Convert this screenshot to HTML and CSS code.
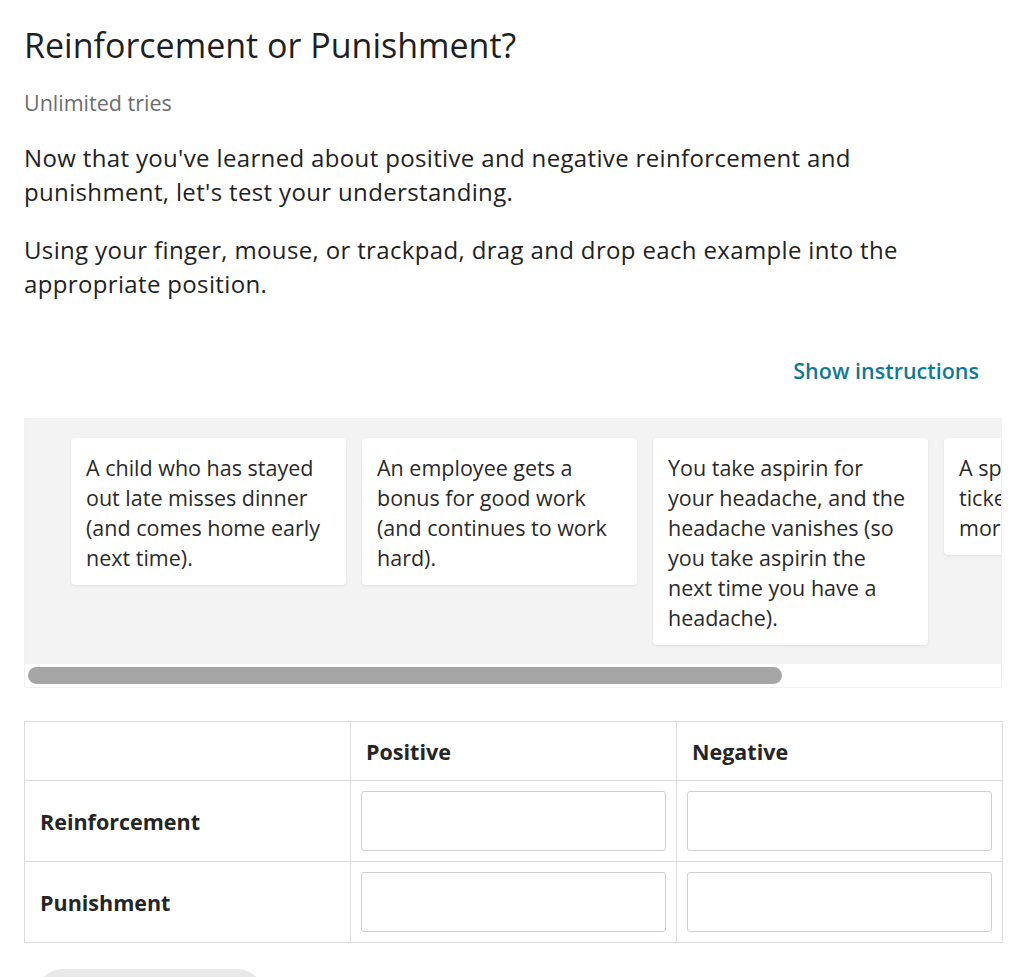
FILE: index.html
```html
<!DOCTYPE html>
<html lang="en">
<head>
    <meta charset="UTF-8">
    <meta name="viewport" content="width=device-width, initial-scale=1.0">
    <title>Reinforcement or Punishment?</title>
    <link rel="stylesheet" href="styles.css">
</head>
<body>
    <div class="activity">
        <h1 class="title">Reinforcement or Punishment?</h1>
        <p class="tries">Unlimited tries</p>

        <div class="intro">
            <p>Now that you've learned about positive and negative reinforcement and punishment, let's test your understanding.</p>
            <p>Using your finger, mouse, or trackpad, drag and drop each example into the appropriate position.</p>
        </div>

        <div class="toolbar">
            <a href="#" class="show-instructions">Show instructions</a>
        </div>

        <!-- Draggable examples -->
        <div class="card-bank">
            <div class="card-track">
                <div class="card">A child who has stayed out late misses dinner (and comes home early next time).</div>
                <div class="card">An employee gets a bonus for good work (and continues to work hard).</div>
                <div class="card">You take aspirin for your headache, and the headache vanishes (so you take aspirin the next time you have a headache).</div>
                <div class="card">A speeding driver gets a ticket each time (no more speeding).</div>
            </div>
            <div class="scroll-track">
                <div class="scroll-thumb"></div>
            </div>
        </div>

        <!-- Drop targets -->
        <table class="grid">
            <tr>
                <th></th>
                <th>Positive</th>
                <th>Negative</th>
            </tr>
            <tr>
                <th>Reinforcement</th>
                <td><div class="drop-zone"></div></td>
                <td><div class="drop-zone"></div></td>
            </tr>
            <tr>
                <th>Punishment</th>
                <td><div class="drop-zone"></div></td>
                <td><div class="drop-zone"></div></td>
            </tr>
        </table>

        <button class="check-button">Check</button>
    </div>
</body>
</html>
```

FILE: styles.css
```css
body {
    margin: 0;
    background-color: #ffffff;
    font-family: 'Open Sans', 'Noto Sans', sans-serif;
    color: #222222;
}
.activity {
    width: 978px;
    padding: 24px 0 0 24px;
}
.title {
    font-size: 34px;
    font-weight: 400;
    line-height: 42px;
    margin: 0;
    color: #1f1f1f;
}
.tries {
    font-size: 21.5px;
    line-height: 28px;
    color: #6d6d6d;
    margin: 23px 0 0;
}
.intro {
    max-width: 900px;
}
.intro p {
    font-size: 24px;
    line-height: 34px;
    margin: 24px 0 0;
    letter-spacing: 0.35px;
}
.toolbar {
    display: flex;
    justify-content: flex-end;
    padding: 56px 23px 0 0;
}
.show-instructions {
    color: #0f7a96;
    font-size: 21.5px;
    font-weight: 600;
    line-height: 28px;
    text-decoration: none;
}
.card-bank {
    margin-top: 33px;
    border: 1px solid #f1f1f1;
    border-top: none;
    overflow: hidden;
}
.card-track {
    display: flex;
    align-items: flex-start;
    gap: 16px;
    padding: 20px 0 19px 46px;
    background-color: #f3f3f3;
    overflow: hidden;
}
.card {
    flex: 0 0 275px;
    box-sizing: border-box;
    background-color: #ffffff;
    border-radius: 4px;
    box-shadow: 0 1px 3px rgba(0, 0, 0, 0.08);
    padding: 15px 15px 12px;
    font-size: 21.5px;
    line-height: 30px;
    color: #2a2a2a;
}
.scroll-track {
    background-color: #ffffff;
    padding: 3px;
    height: 17px;
}
.scroll-thumb {
    width: 754px;
    height: 17px;
    border-radius: 9px;
    background-color: #a6a6a6;
}
.grid {
    margin-top: 33px;
    width: 979px;
    border-collapse: collapse;
    table-layout: fixed;
}
.grid th, .grid td {
    border: 1px solid #dcdcdc;
    text-align: left;
    font-size: 21.5px;
    font-weight: 700;
    color: #252525;
}
.grid tr:first-child th {
    height: 58px;
    padding: 0 15px;
}
.grid tr th:first-child {
    padding: 0 15px;
}
.grid td {
    padding: 10px;
    height: 60px;
}
.drop-zone {
    height: 58px;
    border: 1px solid #cfcfcf;
    border-radius: 3px;
    background-color: #ffffff;
}
.check-button {
    display: block;
    margin: 26px 0 0 11px;
    width: 230px;
    height: 56px;
    border: none;
    border-radius: 28px;
    background-color: #e8e8e8;
    font-family: inherit;
    font-size: 20px;
    color: #9a9a9a;
}
```
